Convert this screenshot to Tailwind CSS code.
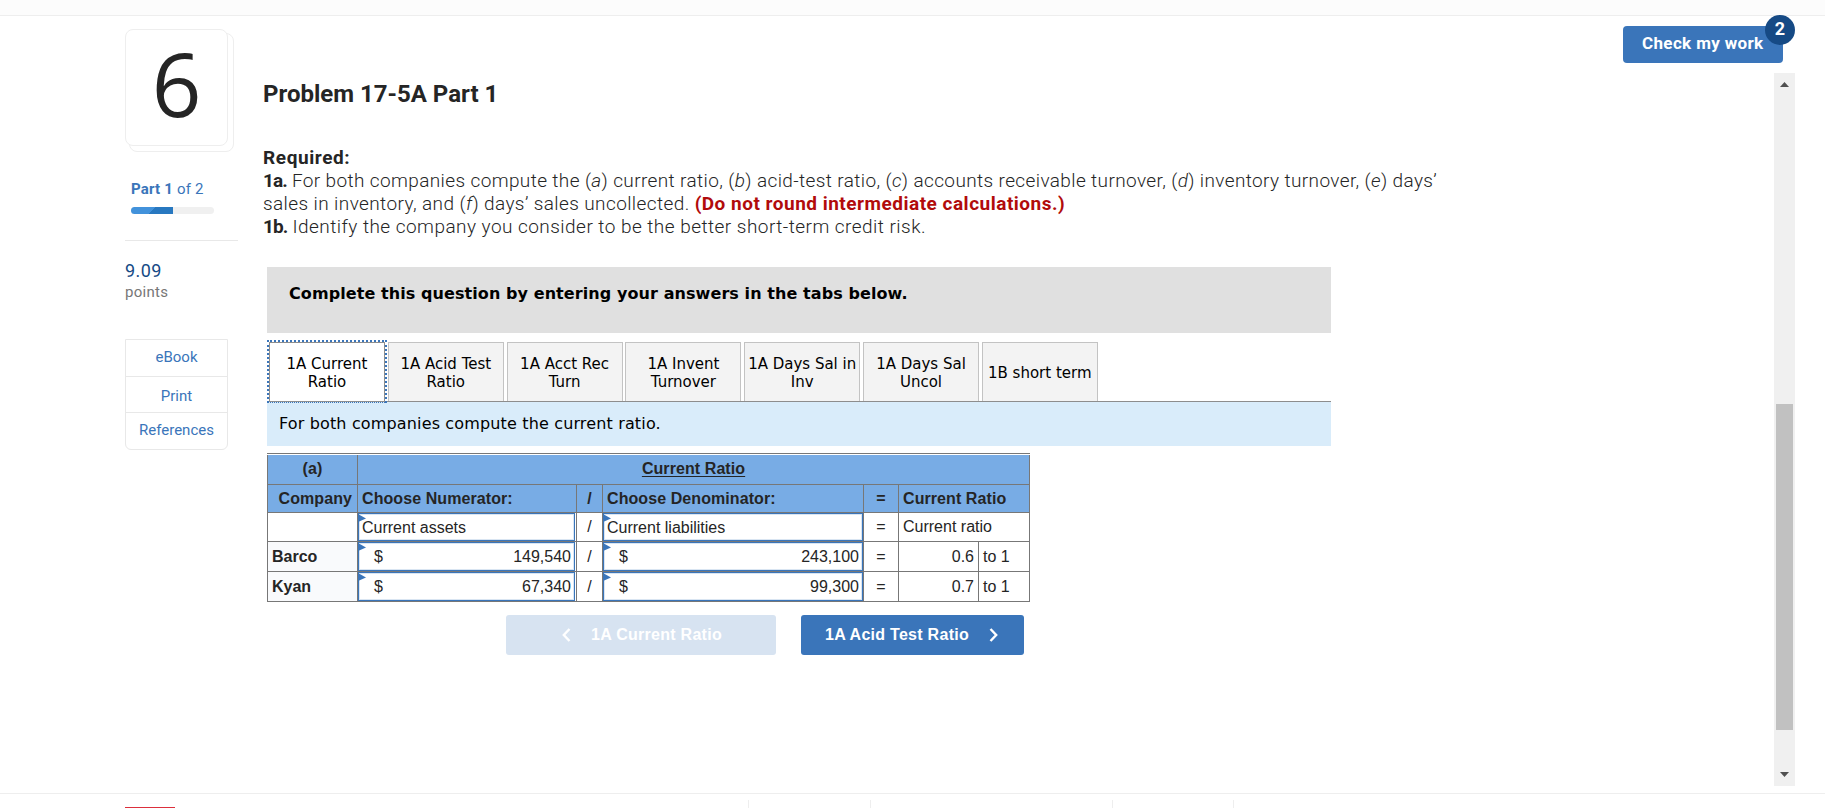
<!DOCTYPE html>
<html lang="en">
<head>
    <meta charset="utf-8">
    <title>Problem 17-5A Part 1</title>
    <script src="https://cdn.jsdelivr.net/npm/@tailwindcss/browser@4"></script>
</head>
<body class="h-[808px] overflow-hidden bg-white font-['Roboto',sans-serif] text-[#252525] flex flex-col">
    <header class="h-4 shrink-0 bg-[#fcfcfc] border-b border-[#eeeeee]"></header>

    <main class="h-[777px] shrink-0 flex">
        <!-- Question sidebar -->
        <aside class="w-[137px] ml-[125px] shrink-0 pt-[13px]">
            <div class="relative w-[110px] h-[123px]">
                <div class="absolute left-1 top-1 w-[105px] h-[119px] rounded-lg border border-[#eeeeee] bg-white"></div>
                <div class="absolute left-0 top-0 w-[103px] h-[117px] pb-[9px] rounded-lg border border-[#eeeeee] bg-white flex items-center justify-center font-['Open_Sans',sans-serif] text-[87px] leading-[100px]">6</div>
            </div>
            <p class="mt-[27px] ml-1.5 text-[15px] leading-5 tracking-[0.2px] text-[#3a75ba]"><b>Part 1</b> of 2</p>
            <div class="mt-[8px] ml-1.5 w-[83px] h-[7px] rounded-full overflow-hidden bg-[#f0f0f0]">
                <div class="w-[42px] h-full bg-[linear-gradient(135deg,#4292db_50%,#2878c0_50%)]"></div>
            </div>
            <div class="mt-[26px] w-[113px] border-t border-[#e8e8e8]"></div>
            <p class="mt-[18px] text-[18px] leading-6 tracking-[0.4px] text-[#164a85]">9.09</p>
            <p class="text-[15px] leading-[18px] tracking-[0.3px] text-[#777777]">points</p>
            <div class="mt-[38px] w-[103px] h-[111px] border border-[#e8e8e8] rounded-b-md text-[15px] text-[#3a75ba] text-center">
                <div class="h-[37px] leading-[35px] border-b border-[#e8e8e8]">eBook</div>
                <div class="h-[36px] leading-[38px] border-b border-[#e8e8e8]">Print</div>
                <div class="h-[36px] leading-[34px]">References</div>
            </div>
        </aside>

        <!-- Question content -->
        <section class="w-[1361px] shrink-0 pt-[62px]">
            <h1 class="ml-px text-2xl leading-8 font-bold">Problem 17-5A Part 1</h1>
            <div class="mt-9 ml-px text-[19px] leading-[23px] font-light tracking-[0.38px] whitespace-nowrap">
                <p class="font-bold tracking-[0.6px]">Required:</p>
                <p><b class="font-bold tracking-[-0.9px]">1a.</b> For both companies compute the (<i>a</i>) current ratio, (<i>b</i>) acid-test ratio, (<i>c</i>) accounts receivable turnover, (<i>d</i>) inventory turnover, (<i>e</i>) days’</p>
                <p><span class="tracking-[0.4px]">sales in inventory, and (<i>f</i>) days’ sales uncollected.</span> <b class="font-bold tracking-[0.5px] text-[#b10b0b]">(Do not round intermediate calculations.)</b></p>
                <p class="tracking-[0.46px]"><b class="font-bold tracking-[-0.9px]">1b.</b> Identify the company you consider to be the better short-term credit risk.</p>
            </div>

            <div class="mt-[29px] ml-[5px] w-[1064px] font-['DejaVu_Sans',sans-serif] text-black">
                <div class="h-[66px] bg-[#e0e0e0] pt-[17px] pl-[22px] text-[16px] leading-5 tracking-[0.08px] font-bold">Complete this question by entering your answers in the tabs below.</div>

                <div class="relative mt-[9px] h-[60px] pl-[2px] border-b border-[#8d8d8d] flex items-stretch gap-[2.8px] text-[15px] leading-[18px] text-center">
                    <div class="w-[116px] pt-[2px] bg-white border border-b-0 border-[#8d8d8d] flex items-center justify-center">1A Current<br>Ratio</div>
                    <div class="w-[116px] pt-[2px] bg-[#f3f3f3] border border-b-0 border-[#c3c3c3] flex items-center justify-center">1A Acid Test<br>Ratio</div>
                    <div class="w-[116px] pt-[2px] bg-[#f3f3f3] border border-b-0 border-[#c3c3c3] flex items-center justify-center">1A Acct Rec<br>Turn</div>
                    <div class="w-[116px] pt-[2px] bg-[#f3f3f3] border border-b-0 border-[#c3c3c3] flex items-center justify-center">1A Invent<br>Turnover</div>
                    <div class="w-[116px] pt-[2px] bg-[#f3f3f3] border border-b-0 border-[#c3c3c3] flex items-center justify-center whitespace-nowrap">1A Days Sal in<br>Inv</div>
                    <div class="w-[116px] pt-[2px] bg-[#f3f3f3] border border-b-0 border-[#c3c3c3] flex items-center justify-center">1A Days Sal<br>Uncol</div>
                    <div class="w-[116px] pt-[2px] bg-[#f3f3f3] border border-b-0 border-[#c3c3c3] flex items-center justify-center whitespace-nowrap">1B short term</div>
                    <div class="absolute left-0 -top-[2px] w-[120px] h-[63px] border-2 border-b border-dotted border-[#3a75ba]"></div>
                </div>
                <div class="h-11 bg-[#d9ecfa] pt-3 pl-3 text-[16px] leading-5 tracking-[0.15px]">For both companies compute the current ratio.</div>
            </div>

            <!-- Answer table -->
            <div class="mt-[7px] ml-[5px] w-[763px] border-t border-[#777777] pt-px font-['Liberation_Sans',sans-serif] text-[16px] leading-5">
                <table class="w-[763px] table-fixed border-collapse">
                    <colgroup>
                        <col class="w-[90px]"><col class="w-[219px]"><col class="w-[26px]"><col class="w-[261px]"><col class="w-[35px]"><col class="w-[80px]"><col class="w-[51px]">
                    </colgroup>
                    <tr class="h-[29px] bg-[#78ace5] font-bold tracking-[0.08px]">
                        <td class="border border-t-0 border-[#777777] text-center">(a)</td>
                        <td colspan="6" class="border border-t-0 border-[#777777] text-center underline underline-offset-2">Current Ratio</td>
                    </tr>
                    <tr class="h-[28px] bg-[#78ace5] font-bold tracking-[0.08px]">
                        <td class="border border-[#777777] text-right pr-[5px] pt-px">Company</td>
                        <td class="border border-[#777777] pl-1 pt-px">Choose Numerator:</td>
                        <td class="border border-[#777777] text-center pt-px">/</td>
                        <td class="border border-[#777777] pl-1 pt-px">Choose Denominator:</td>
                        <td class="border border-[#777777] text-center pt-px">=</td>
                        <td colspan="2" class="border border-[#777777] pl-1 pt-px">Current Ratio</td>
                    </tr>
                    <tr class="h-[29px]">
                        <td class="border border-[#777777]"></td>
                        <td class="border border-[#777777] p-0">
                            <div class="relative w-[217px] h-[28px] border border-[#3a75ba] pl-[3px] leading-[27px] shadow-[inset_0_0_0_1px_#d9e5f2]">Current assets
                                <svg class="absolute -left-px top-0" width="8" height="8"><path d="M0 0L8 4.5L0 8Z" fill="#3a75ba"/></svg>
                            </div>
                        </td>
                        <td class="border border-[#777777] text-center">/</td>
                        <td class="border border-[#777777] p-0">
                            <div class="relative w-[260px] h-[28px] border border-[#3a75ba] pl-[3px] leading-[27px] shadow-[inset_0_0_0_1px_#d9e5f2]">Current liabilities
                                <svg class="absolute -left-px top-0" width="8" height="8"><path d="M0 0L8 4.5L0 8Z" fill="#3a75ba"/></svg>
                            </div>
                        </td>
                        <td class="border border-[#777777] text-center">=</td>
                        <td colspan="2" class="border border-[#777777] pl-1">Current ratio</td>
                    </tr>
                    <tr class="h-[30px]">
                        <td class="border border-[#777777] bg-[#f9fafc] font-bold pl-1 pt-px">Barco</td>
                        <td class="border border-[#777777] p-0">
                            <div class="relative w-[217px] h-[29px] border border-[#3a75ba] pl-[15px] pr-[3px] leading-[27px] shadow-[inset_0_0_0_1px_#d9e5f2] flex justify-between"><span>$</span><span>149,540</span>
                                <svg class="absolute -left-px top-0" width="8" height="8"><path d="M0 0L8 4.5L0 8Z" fill="#3a75ba"/></svg>
                            </div>
                        </td>
                        <td class="border border-[#777777] text-center pt-px">/</td>
                        <td class="border border-[#777777] p-0">
                            <div class="relative w-[260px] h-[29px] border border-[#3a75ba] pl-[15px] pr-[3px] leading-[27px] shadow-[inset_0_0_0_1px_#d9e5f2] flex justify-between"><span>$</span><span>243,100</span>
                                <svg class="absolute -left-px top-0" width="8" height="8"><path d="M0 0L8 4.5L0 8Z" fill="#3a75ba"/></svg>
                            </div>
                        </td>
                        <td class="border border-[#777777] text-center pt-px">=</td>
                        <td class="border border-[#777777] text-right pr-1 pt-px">0.6</td>
                        <td class="border border-[#777777] pl-1 pt-px">to 1</td>
                    </tr>
                    <tr class="h-[30px]">
                        <td class="border border-[#777777] bg-[#f9fafc] font-bold pl-1 pt-px">Kyan</td>
                        <td class="border border-[#777777] p-0">
                            <div class="relative w-[217px] h-[29px] border border-[#3a75ba] pl-[15px] pr-[3px] leading-[27px] shadow-[inset_0_0_0_1px_#d9e5f2] flex justify-between"><span>$</span><span>67,340</span>
                                <svg class="absolute -left-px top-0" width="8" height="8"><path d="M0 0L8 4.5L0 8Z" fill="#3a75ba"/></svg>
                            </div>
                        </td>
                        <td class="border border-[#777777] text-center pt-px">/</td>
                        <td class="border border-[#777777] p-0">
                            <div class="relative w-[260px] h-[29px] border border-[#3a75ba] pl-[15px] pr-[3px] leading-[27px] shadow-[inset_0_0_0_1px_#d9e5f2] flex justify-between"><span>$</span><span>99,300</span>
                                <svg class="absolute -left-px top-0" width="8" height="8"><path d="M0 0L8 4.5L0 8Z" fill="#3a75ba"/></svg>
                            </div>
                        </td>
                        <td class="border border-[#777777] text-center pt-px">=</td>
                        <td class="border border-[#777777] text-right pr-1 pt-px">0.7</td>
                        <td class="border border-[#777777] pl-1 pt-px">to 1</td>
                    </tr>
                </table>
            </div>

            <div class="mt-[13px] ml-[244px] flex gap-[25px] font-['Liberation_Sans',sans-serif] text-[16px] font-bold text-white tracking-[0.28px]">
                <button class="w-[270px] h-10 pl-[56px] rounded-[3px] bg-[#d7e3f1] flex items-center">
                    <svg width="9" height="14" fill="none" stroke="#fff" stroke-width="2.4"><path d="M7.5 1L1.8 7L7.5 13"/></svg>
                    <span class="ml-5">1A Current Ratio</span>
                </button>
                <button class="w-[223px] h-10 pl-[24px] rounded-[3px] bg-[#3a75ba] flex items-center">
                    <span>1A Acid Test Ratio</span>
                    <svg class="ml-5" width="9" height="14" fill="none" stroke="#fff" stroke-width="2.4"><path d="M1.5 1L7.2 7L1.5 13"/></svg>
                </button>
            </div>
        </section>

        <!-- Check button and scrollbar -->
        <div class="w-[172px] pt-[10px]">
            <button class="relative w-[160px] h-[37px] rounded bg-[#3a75ba] text-white text-[17px] font-bold tracking-[0.36px] pl-[19px] pb-px text-left">Check my work
                <span class="absolute left-[142px] -top-[11px] size-[30px] rounded-full bg-[#164a85] text-center text-[18px] leading-[27px] tracking-normal">2</span>
            </button>
            <div class="mt-[10px] ml-[151px] w-[21px] h-[713px] bg-[#f0f0f0] flex flex-col items-center">
                <svg class="mt-[9px]" width="9" height="5"><path d="M0 5L4.5 0L9 5Z" fill="#505050"/></svg>
                <div class="mt-[317px] w-[17px] h-[326px] bg-[#c1c1c1]"></div>
                <svg class="mt-[42px]" width="9" height="5"><path d="M0 0H9L4.5 5Z" fill="#505050"/></svg>
            </div>
        </div>
    </main>

    <footer class="h-[15px] shrink-0 border-t border-[#eeeeee] flex items-end">
        <div class="ml-[125px] w-[50px] h-px bg-[#dc2f3c]"></div>
        <div class="ml-[573px] w-px h-2 bg-[#eeeeee]"></div>
        <div class="ml-[121px] w-px h-2 bg-[#eeeeee]"></div>
        <div class="ml-[241px] w-px h-2 bg-[#eeeeee]"></div>
        <div class="ml-[120px] w-px h-2 bg-[#eeeeee]"></div>
    </footer>
</body>
</html>
